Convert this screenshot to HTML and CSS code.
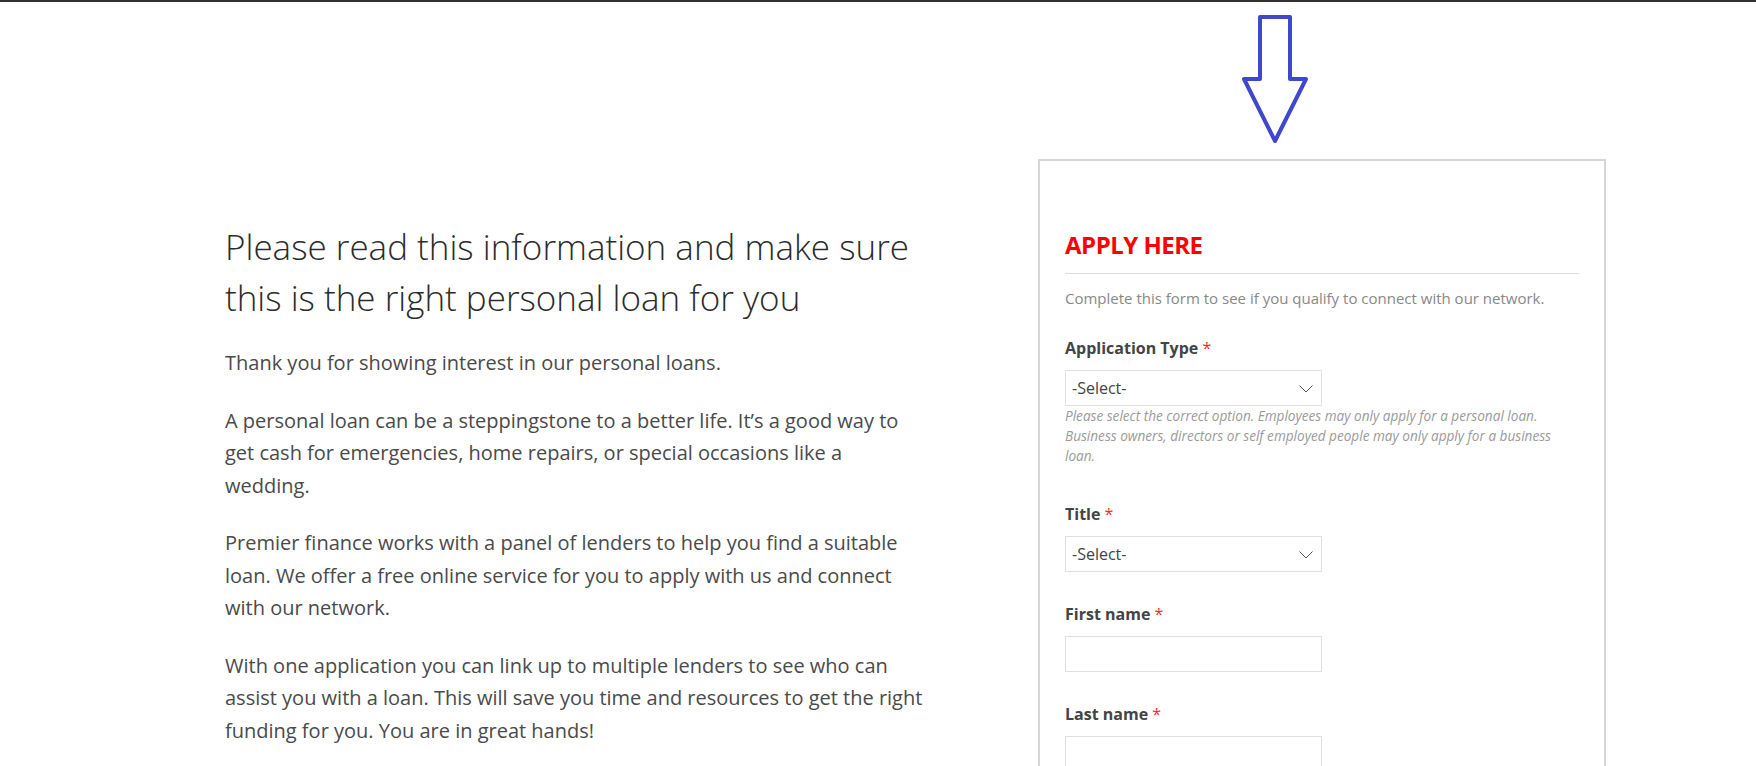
FILE: index.html
```html
<!DOCTYPE html>
<html lang="en">
<head>
<meta charset="utf-8">
<title>Personal loan – Apply here</title>
<link rel="stylesheet" href="styles.css">
</head>
<body>
<div class="topbar"></div>
<svg class="annot-arrow" width="68" height="132" viewBox="0 0 68 132" aria-hidden="true">
  <path d="M18,4 L48,4 L48,66 L64,66 L33,128 L2,66 L18,66 Z" fill="none" stroke="#3f47cc" stroke-width="4" stroke-linejoin="round"/>
</svg>
<main class="page">
  <section class="info">
    <h1 class="info-title">Please read this information and make sure this is the right personal loan for you</h1>
    <p class="info-text first">Thank you for showing interest in our personal loans.</p>
    <p class="info-text">A personal loan can be a steppingstone to a better life. It’s a good way to get cash for emergencies, home repairs, or special occasions like a wedding.</p>
    <p class="info-text">Premier finance works with a panel of lenders to help you find a suitable loan. We offer a free online service for you to apply with us and connect with our network.</p>
    <p class="info-text">With one application you can link up to multiple lenders to see who can assist you with a loan. This will save you time and resources to get the right funding for you. You are in great hands!</p>
  </section>
  <section class="card">
    <h2 class="card-title">APPLY HERE</h2>
    <p class="card-intro">Complete this form to see if you qualify to connect with our network.</p>
    <div class="field field-first">
      <label class="field-label">Application Type <span class="req">*</span></label>
      <div class="select-box">
        <select class="select"><option>-Select-</option><option>Personal loan</option><option>Business loan</option></select>
        <svg class="chev" width="14" height="8" viewBox="0 0 14 8" aria-hidden="true"><polyline points="0.5,0.5 7,7 13.5,0.5" fill="none" stroke="#555" stroke-width="1"/></svg>
      </div>
      <p class="field-help">Please select the correct option. Employees may only apply for a personal loan. Business owners, directors or self employed people may only apply for a business loan.</p>
    </div>
    <div class="field field-after-help">
      <label class="field-label">Title <span class="req">*</span></label>
      <div class="select-box">
        <select class="select"><option>-Select-</option><option>Mr</option><option>Mrs</option><option>Ms</option></select>
        <svg class="chev" width="14" height="8" viewBox="0 0 14 8" aria-hidden="true"><polyline points="0.5,0.5 7,7 13.5,0.5" fill="none" stroke="#555" stroke-width="1"/></svg>
      </div>
    </div>
    <div class="field">
      <label class="field-label">First name <span class="req">*</span></label>
      <input class="text-input" type="text">
    </div>
    <div class="field">
      <label class="field-label">Last name <span class="req">*</span></label>
      <input class="text-input" type="text">
    </div>
  </section>
</main>
</body>
</html>
```

FILE: styles.css
```css
html, body {
  margin: 0;
  padding: 0;
  background: #fff;
}

body {
  font-family: "Open Sans", "Noto Sans", sans-serif;
  color: #444;
  position: relative;
}

.topbar {
  height: 2px;
  background: #333;
}

.annot-arrow {
  position: absolute;
  left: 1242px;
  top: 13px;
}

.page {
  display: flex;
  align-items: flex-start;
  padding-left: 225px;
}

.info {
  width: 702px;
  margin-top: 219px;
}

.info-title {
  margin: 0;
  font-family: "Open Sans", "Noto Sans", sans-serif;
  font-weight: 300;
  font-size: 35px;
  line-height: 51px;
  color: #2b2b2b;
}

.info-text {
  margin: 25px 0 0;
  font-size: 20px;
  line-height: 32.5px;
  color: #4a4a4a;
}

.info-text.first {
  margin-top: 24px;
}

.card {
  margin-left: 111px;
  margin-top: 157px;
  width: 568px;
  box-sizing: border-box;
  border: 2px solid #d6d6d6;
  padding: 69px 25px 40px;
}

.card-title {
  margin: 0;
  padding-bottom: 14px;
  border-bottom: 1px solid #dcdcdc;
  font-size: 24px;
  line-height: 29px;
  font-weight: 700;
  letter-spacing: -0.5px;
  color: #ff0000;
}

.card-intro {
  margin: 13px 0 0;
  font-size: 15px;
  line-height: 22px;
  color: #888;
}

.field {
  margin-top: 30px;
}

.field-first {
  margin-top: 27px;
}

.field-after-help {
  margin-top: 36px;
}

.field-label {
  display: block;
  font-size: 16px;
  line-height: 24px;
  font-weight: 700;
  color: #444;
}

.req {
  color: #ff2a2a;
  font-weight: 400;
}

.select-box {
  position: relative;
  width: 257px;
  margin-top: 10px;
}

.select {
  display: block;
  width: 257px;
  height: 36px;
  box-sizing: border-box;
  margin: 0;
  padding: 0 30px 0 6px;
  border: 1px solid #e0e0e0;
  border-radius: 0;
  background: #fff;
  font-family: "Open Sans", "Noto Sans", sans-serif;
  font-size: 16px;
  color: #444;
  appearance: none;
  -webkit-appearance: none;
  outline: none;
}

.chev {
  position: absolute;
  right: 9px;
  top: 15px;
  pointer-events: none;
}

.field-help {
  margin: 0;
  font-size: 13.6px;
  line-height: 20px;
  font-style: italic;
  color: #9a9a9a;
}

.text-input {
  display: block;
  width: 257px;
  height: 36px;
  box-sizing: border-box;
  margin: 10px 0 0;
  padding: 0 6px;
  border: 1px solid #e0e0e0;
  border-radius: 0;
  font-family: "Open Sans", "Noto Sans", sans-serif;
  font-size: 16px;
  color: #444;
  outline: none;
}
```
